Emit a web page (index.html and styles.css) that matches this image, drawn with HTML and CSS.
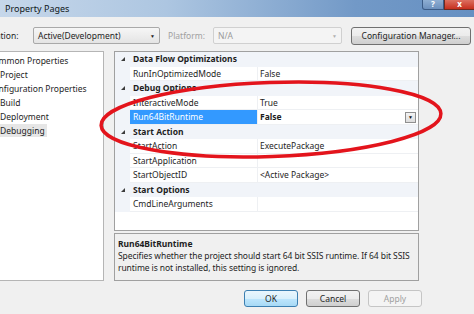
FILE: index.html
```html
<!DOCTYPE html>
<html lang="en">
<head>
  <meta charset="UTF-8">
  <title>Property Pages</title>
  <link rel="stylesheet" href="styles.css">
</head>
<body>
  <div class="dialog">
    <div class="titlebar">
      <span class="title">Property Pages</span>
      <div class="caption-buttons">
        <span class="cap-help">?</span>
        <span class="cap-close">x</span>
      </div>
    </div>

    <div class="toolbar">
      <span class="label label-config">Configuration:</span>
      <div class="combo combo-config">
        <span>Active(Development)</span>
        <span class="combo-arrow">&#9660;</span>
      </div>
      <span class="label label-platform">Platform:</span>
      <div class="combo combo-platform">
        <span>N/A</span>
        <span class="combo-arrow">&#9660;</span>
      </div>
      <button class="btn btn-config">Configuration Manager...</button>
    </div>

    <div class="main">
      <div class="tree">
        <div class="tree-item root">Common Properties</div>
        <div class="tree-item child">Project</div>
        <div class="tree-item root">Configuration Properties</div>
        <div class="tree-item child">Build</div>
        <div class="tree-item child">Deployment</div>
        <div class="tree-item child"><span class="tree-selected">Debugging</span></div>
      </div>

      <div class="props">
        <div class="grid">
          <div class="row category"><span class="expander"></span><span class="cat-name">Data Flow Optimizations</span></div>
          <div class="row"><span class="margin"></span><span class="name">RunInOptimizedMode</span><span class="value">False</span></div>
          <div class="row category"><span class="expander"></span><span class="cat-name">Debug Options</span></div>
          <div class="row"><span class="margin"></span><span class="name">InteractiveMode</span><span class="value">True</span></div>
          <div class="row"><span class="margin"></span><span class="name selected">Run64BitRuntime</span><span class="value bold">False<span class="drop-btn">&#9660;</span></span></div>
          <div class="row category"><span class="expander"></span><span class="cat-name">Start Action</span></div>
          <div class="row"><span class="margin"></span><span class="name">StartAction</span><span class="value">ExecutePackage</span></div>
          <div class="row"><span class="margin"></span><span class="name">StartApplication</span><span class="value"></span></div>
          <div class="row"><span class="margin"></span><span class="name">StartObjectID</span><span class="value">&lt;Active Package&gt;</span></div>
          <div class="row category"><span class="expander"></span><span class="cat-name">Start Options</span></div>
          <div class="row"><span class="margin"></span><span class="name">CmdLineArguments</span><span class="value"></span></div>
        </div>
        <div class="description">
          <div class="desc-title">Run64BitRuntime</div>
          <div class="desc-text">Specifies whether the project should start 64 bit SSIS runtime. If 64 bit SSIS runtime is not installed, this setting is ignored.</div>
        </div>
      </div>
    </div>

    <div class="footer">
      <button class="btn btn-ok">OK</button>
      <button class="btn">Cancel</button>
      <button class="btn btn-disabled">Apply</button>
    </div>
  </div>

  <!-- hand drawn highlight over the grid -->
  <svg class="marker" width="474" height="314" viewBox="0 0 474 314">
    <ellipse cx="271" cy="119.5" rx="170" ry="37" transform="rotate(-2 271 119.5)" fill="none" stroke="#e3141c" stroke-width="3.5"/>
  </svg>
</body>
</html>
```

FILE: styles.css
```css
body {
  margin: 0;
  width: 474px;
  height: 314px;
  overflow: hidden;
  position: relative;
  background-color: #f0f0f0;
  font-family: "Noto Sans", "Open Sans", sans-serif;
  font-size: 8.5px;
  color: #1e1e1e;
}

.dialog {
  display: flex;
  flex-direction: column;
  height: 100%;
}

/* Title bar */
.titlebar {
  height: 17px;
  display: flex;
  align-items: flex-start;
  background: linear-gradient(to right, #c6d7ea 0%, #adc6e1 35%, #7299c7 75%, #6690c2 100%);
}

.title {
  margin-left: 5px;
  margin-top: 2px;
  font-size: 9px;
  color: #101820;
}

.caption-buttons {
  margin-left: auto;
  display: flex;
}

.cap-help,
.cap-close {
  height: 9px;
  line-height: 7px;
  text-align: center;
  color: #fff;
  font-size: 8px;
  font-weight: bold;
  border: 1px solid #3b5b86;
  border-top: none;
}

.cap-help {
  width: 20px;
  background: linear-gradient(#8eaed3, #6c90bd);
  border-radius: 0 0 0 3px;
}

.cap-close {
  width: 29px;
  background: linear-gradient(#dc6f60, #c62f1e);
  border-color: #6f2a20;
  border-right: none;
}

/* Configuration bar */
.toolbar {
  height: 19px;
  margin-top: 9px;
  display: flex;
  align-items: center;
}

.label {
  white-space: nowrap;
}

.label-config {
  margin-left: -39px;
  width: 72px;
}

.label-platform {
  margin-left: 8px;
  width: 45px;
  color: #a0a0a0;
}

.combo {
  height: 15px;
  display: flex;
  align-items: center;
  justify-content: space-between;
  padding: 0 4px;
  border: 1px solid #a9a9a9;
  border-radius: 2px;
  background: linear-gradient(#f6f6f6, #e4e4e4);
}

.combo-config {
  width: 117px;
}

.combo-platform {
  width: 119px;
  background: #f4f4f4;
  border-color: #d0d0d0;
  color: #9a9a9a;
}

.combo-arrow {
  font-size: 5px;
  color: #222;
}

.combo-platform .combo-arrow {
  color: #b0b0b0;
}

.btn {
  font-family: inherit;
  font-size: 8.5px;
  color: #1e1e1e;
  border: 1px solid #707070;
  border-radius: 3px;
  background: linear-gradient(#f2f2f2 0%, #ebebeb 50%, #dddddd 51%, #cfcfcf 100%);
  padding: 0;
}

.btn-config {
  margin-left: 9px;
  width: 120px;
  height: 18px;
}

/* Main area */
.main {
  display: flex;
  margin-top: 6px;
  height: 230px;
}

.tree {
  width: 105px;
  margin-left: -1px;
  background-color: #fff;
  border: 1px solid #b5b5b5;
  box-sizing: border-box;
  padding-top: 2px;
  overflow: hidden;
}

.tree-item {
  height: 14px;
  line-height: 14px;
  white-space: nowrap;
}

.tree-item.root {
  margin-left: -12px;
}

.tree-item.child {
  margin-left: 0;
}

.tree-selected {
  display: inline-block;
  padding-right: 2px;
  background-color: #e6e6e6;
  line-height: 13px;
}

.props {
  margin-left: 10px;
  width: 305px;
  display: flex;
  flex-direction: column;
}

.grid {
  height: 180px;
  background-color: #fff;
  border: 1px solid #a0a0a0;
  box-sizing: border-box;
}

.row {
  height: 14.5px;
  display: flex;
  align-items: stretch;
  line-height: 14.5px;
}

.row.category {
  background-color: #f1f4f9;
  font-weight: bold;
}

.expander {
  width: 15px;
  position: relative;
}

.expander::after {
  content: "";
  position: absolute;
  left: 6px;
  top: 5px;
  border-left: 4px solid transparent;
  border-bottom: 4px solid #3c3c3c;
}

.cat-name {
  padding-left: 3px;
}

.margin {
  width: 15px;
  background-color: #f1f4f9;
}

.name {
  width: 128px;
  padding-left: 3px;
  border-bottom: 1px solid #eef0f3;
  border-right: 1px solid #eef0f3;
  box-sizing: border-box;
  white-space: nowrap;
}

.name.selected {
  background-color: #3399ff;
  color: #fff;
}

.value {
  flex: 1;
  padding-left: 2px;
  border-bottom: 1px solid #eef0f3;
  box-sizing: border-box;
  position: relative;
  white-space: nowrap;
}

.value.bold {
  font-weight: bold;
}

.drop-btn {
  position: absolute;
  right: 2px;
  top: 2px;
  width: 9px;
  height: 9px;
  line-height: 9px;
  text-align: center;
  font-size: 5px;
  color: #111;
  border: 1px solid #8f8f8f;
  background: linear-gradient(#f4f4f4, #dcdcdc);
}

.description {
  margin-top: 2px;
  height: 48px;
  padding: 4px 1px 0 3px;
  box-sizing: border-box;
  border: 1px solid #a0a0a0;
  background-color: #f0f0f0;
  line-height: 12px;
}

.desc-title {
  font-weight: bold;
}

.desc-text {
  letter-spacing: -0.08px;
}

/* Footer buttons */
.footer {
  display: flex;
  gap: 8px;
  margin-top: 9px;
  margin-left: 244px;
}

.footer .btn {
  width: 54px;
  height: 17px;
}

.btn-ok {
  border-color: #3c7fb1;
  background: linear-gradient(#eaf6fd 0%, #d9f0fc 50%, #bee6fd 51%, #a7d9f5 100%);
}

.btn-disabled {
  color: #a0a0a0;
  border-color: #c5c5c5;
  background: #f4f4f4;
}

/* Red marker drawn over everything */
.marker {
  position: absolute;
  left: 0;
  top: 0;
  pointer-events: none;
}
```
